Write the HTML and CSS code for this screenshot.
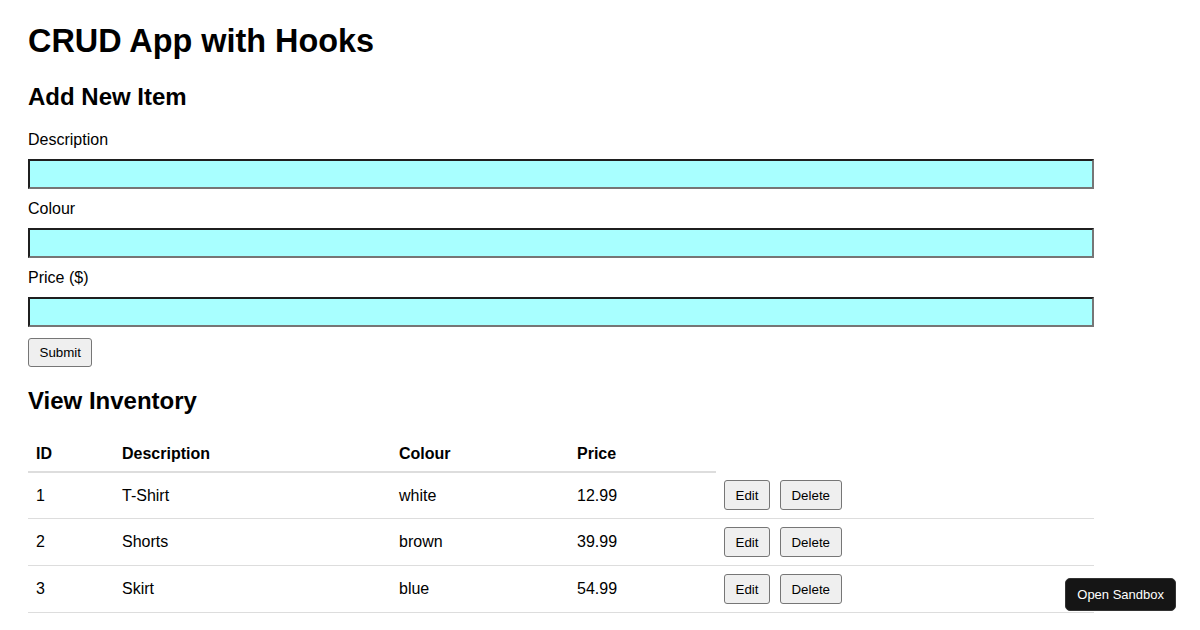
FILE: index.html
```html
<!DOCTYPE html>
<html lang="en">
<head>
    <meta charset="UTF-8">
    <title>CRUD App with Hooks</title>
    <link rel="stylesheet" href="styles.css">
</head>
<body>
    <div class="app">
        <h1>CRUD App with Hooks</h1>

        <!-- add form -->
        <h2>Add New Item</h2>
        <form class="item-form">
            <label for="description">Description</label>
            <input type="text" id="description" class="field">
            <label for="colour">Colour</label>
            <input type="text" id="colour" class="field">
            <label for="price">Price ($)</label>
            <input type="text" id="price" class="field">
            <button type="button" class="btn">Submit</button>
        </form>

        <!-- inventory table -->
        <h2 class="table-title">View Inventory</h2>
        <table class="inventory">
            <thead>
                <tr>
                    <th class="col-id">ID</th>
                    <th class="col-desc">Description</th>
                    <th class="col-colour">Colour</th>
                    <th class="col-price">Price</th>
                </tr>
            </thead>
            <tbody>
                <tr>
                    <td>1</td>
                    <td>T-Shirt</td>
                    <td>white</td>
                    <td>12.99</td>
                    <td class="actions"><button class="btn">Edit</button><button class="btn">Delete</button></td>
                </tr>
                <tr>
                    <td>2</td>
                    <td>Shorts</td>
                    <td>brown</td>
                    <td>39.99</td>
                    <td class="actions"><button class="btn">Edit</button><button class="btn">Delete</button></td>
                </tr>
                <tr>
                    <td>3</td>
                    <td>Skirt</td>
                    <td>blue</td>
                    <td>54.99</td>
                    <td class="actions"><button class="btn">Edit</button><button class="btn">Delete</button></td>
                </tr>
            </tbody>
        </table>
    </div>

    <button class="sandbox-btn">Open Sandbox</button>
</body>
</html>
```

FILE: styles.css
```css
body {
    font-family: 'Liberation Sans', Arial, sans-serif;
    font-size: 16px;
    color: #000;
    background-color: #fff;
    margin: 0;
    padding: 0;
}

.app {
    width: 1066px;
    padding: 0 28px;
}

h1 {
    font-size: 32.4px;
    margin: 23px 0;
}

h2 {
    font-size: 24px;
    margin: 20px 0;
}

.table-title {
    margin-bottom: 22px;
}

.item-form {
    display: flex;
    flex-direction: column;
    align-items: flex-start;
}

.item-form label {
    line-height: 18px;
    margin-bottom: 10px;
}

.field {
    box-sizing: border-box;
    width: 100%;
    height: 30px;
    margin: 0 0 11px 0;
    background-color: #a8ffff;
    border-style: solid;
    border-width: 2px;
    border-color: #1f1f1f #767676 #767676 #1f1f1f;
    font-size: 16px;
}

.btn {
    font-family: 'Liberation Sans', Arial, sans-serif;
    font-size: 13.33px;
    height: 30px;
    padding: 0 10.5px;
    background-color: #efefef;
    color: #000;
    border: 1px solid #767676;
    border-radius: 3px;
}

.item-form .btn {
    height: 29px;
}

.inventory {
    width: 100%;
    border-collapse: collapse;
    text-align: left;
}

.inventory th {
    padding: 8px;
    line-height: 18px;
    border-bottom: 2px solid #ddd;
}

.inventory td {
    padding: 8px;
    line-height: 18px;
    border-bottom: 1px solid #ddd;
}

.col-id {
    width: 70px;
}

.col-desc {
    width: 261px;
}

.col-colour {
    width: 162px;
}

.col-price {
    width: 131px;
}

.actions .btn {
    margin-right: 10px;
}

.sandbox-btn {
    position: fixed;
    right: 24px;
    bottom: 19px;
    font-family: 'Liberation Sans', Arial, sans-serif;
    font-size: 13px;
    color: #fff;
    background-color: #151515;
    border: 1px solid #333;
    border-radius: 5px;
    padding: 0 11px;
    height: 33px;
}
```
